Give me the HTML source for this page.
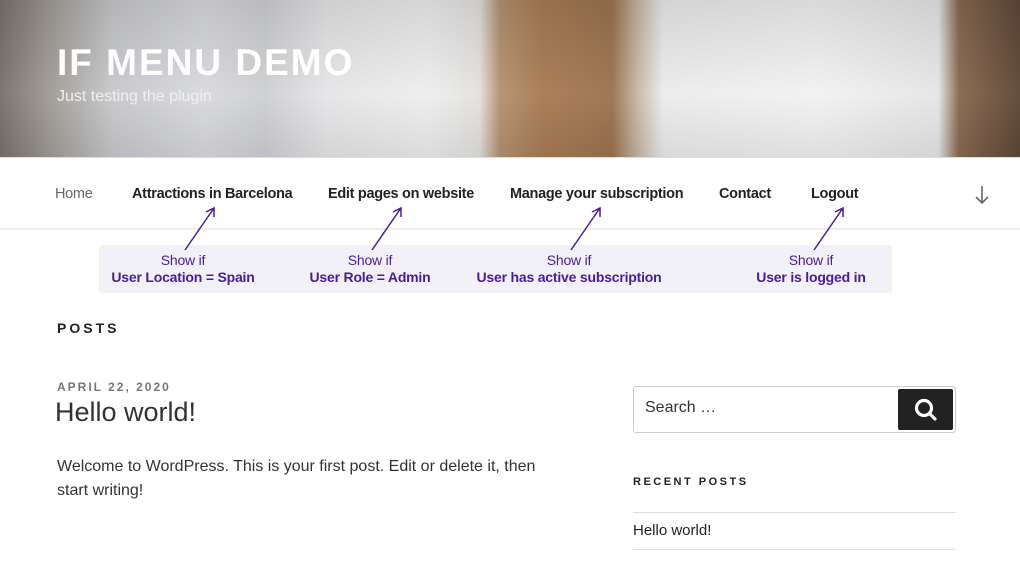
<!DOCTYPE html>
<html><head><style>
body{margin:0;width:1020px;height:574px;overflow:hidden;background:#fff;font-family:"Liberation Sans",sans-serif;position:relative}
.hdr{position:absolute;left:0;top:0;width:1020px;height:157px;background:linear-gradient(90deg,#7a726c 0%,#a29d98 5%,#c8c9cc 11%,#d9dadd 20%,#cfd0d2 26%,#e6e6e8 32%,#eeeeee 42%,#e4e2e0 47%,#b59373 49%,#a97d55 53%,#9c7450 60%,#c8b8a6 62.5%,#ececec 65%,#f2f2f2 80%,#e6e6e6 92%,#8a6a50 94%,#5e4838 100%);}
.hdr:after{content:"";position:absolute;inset:0;background:linear-gradient(180deg,rgba(0,0,0,.1),rgba(255,255,255,.03) 60%,rgba(0,0,0,.08))}
.t{position:absolute;color:#fff;z-index:2}
.nav{position:absolute;top:186px;font-size:14.5px;font-weight:bold;color:#222;letter-spacing:-0.3px}
.ann{position:absolute;top:245px;left:99px;width:793px;height:48px;background:#f3f1f8;border-radius:3px}
.a{position:absolute;color:#4a1c99;font-size:14px;text-align:center;line-height:17px;letter-spacing:-0.2px}
.a b{display:block}
</style></head><body>
<div class="hdr"></div>
<div class="t" style="left:57px;top:42px;font-size:37px;font-weight:bold;letter-spacing:2px">IF MENU DEMO</div>
<div class="t" style="left:57px;top:88px;font-size:16px;color:#f0f0f0">Just testing the plugin</div>
<div style="position:absolute;top:157px;left:0;width:1020px;height:1px;background:#ddd"></div>
<div style="position:absolute;top:228px;left:0;width:1020px;height:2px;background:#eee"></div>
<div class="nav" style="left:55px;color:#666;font-weight:normal">Home</div>
<div class="nav" style="left:132px">Attractions in Barcelona</div>
<div class="nav" style="left:328px">Edit pages on website</div>
<div class="nav" style="left:510px">Manage your subscription</div>
<div class="nav" style="left:719px">Contact</div>
<div class="nav" style="left:811px">Logout</div>
<svg style="position:absolute;left:970px;top:183px" width="24" height="24"><path d="M12 3V20M6 14L12 20L18 14" stroke="#666" stroke-width="1.6" fill="none"/></svg>
<div class="ann"></div>
<svg style="position:absolute;left:0;top:0" width="1020" height="260" fill="none" stroke="#4a1c99" stroke-width="1.5">
<path d="M185 250L214 208M206 212L214 208L214 217"/>
<path d="M372 250L401 208M393 212L401 208L401 217"/>
<path d="M571 250L600 208M592 212L600 208L600 217"/>
<path d="M814 250L843 208M835 212L843 208L843 217"/>
</svg>
<div class="a" style="left:103px;width:160px;top:252px">Show if<b>User Location = Spain</b></div>
<div class="a" style="left:290px;width:160px;top:252px">Show if<b>User Role = Admin</b></div>
<div class="a" style="left:469px;width:200px;top:252px">Show if<b>User has active subscription</b></div>
<div class="a" style="left:731px;width:160px;top:252px">Show if<b>User is logged in</b></div>
<div style="position:absolute;left:57px;top:320px;font-size:14px;font-weight:bold;letter-spacing:3px;color:#222">POSTS</div>
<div style="position:absolute;left:57px;top:380px;font-size:12px;font-weight:bold;letter-spacing:2px;color:#767676">APRIL 22, 2020</div>
<div style="position:absolute;left:55px;top:397px;font-size:27px;color:#333">Hello world!</div>
<div style="position:absolute;left:57px;top:455px;width:505px;font-size:16px;line-height:24px;color:#333">Welcome to WordPress. This is your first post. Edit or delete it, then start writing!</div>
<div style="position:absolute;left:633px;top:386px;width:321px;height:45px;border:1px solid #ccc;border-radius:3px"></div>
<div style="position:absolute;left:645px;top:399px;font-size:16px;color:#333">Search …</div>
<div style="position:absolute;left:898px;top:389px;width:55px;height:41px;background:#222;border-radius:2px"></div>
<svg style="position:absolute;left:912px;top:396px" width="28" height="28" fill="none" stroke="#fff" stroke-width="3.2"><circle cx="12" cy="12" r="7.5"/><path d="M17.5 17.5L23 23" stroke-linecap="round"/></svg>
<div style="position:absolute;left:633px;top:476px;font-size:11px;font-weight:bold;letter-spacing:2.5px;color:#222">RECENT POSTS</div>
<div style="position:absolute;left:633px;top:512px;width:323px;height:1px;background:#ddd"></div>
<div style="position:absolute;left:633px;top:522px;font-size:15px;color:#222">Hello world!</div>
<div style="position:absolute;left:633px;top:549px;width:323px;height:1px;background:#ddd"></div>
</body></html>
